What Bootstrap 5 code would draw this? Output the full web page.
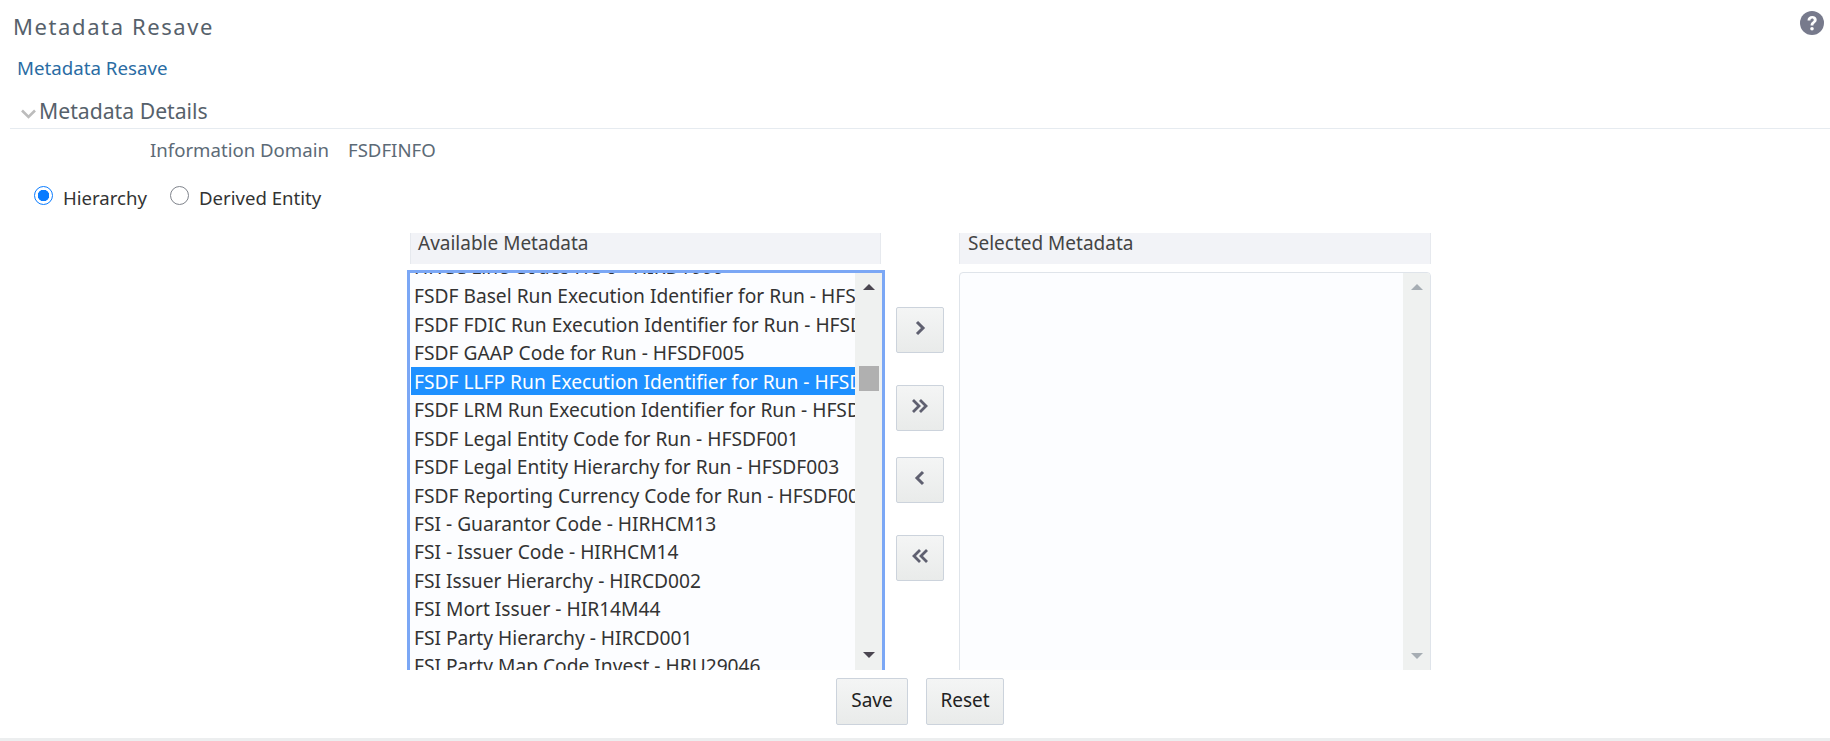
<!DOCTYPE html>
<html lang="en">
<head>
<meta charset="utf-8">
<title>Metadata Resave</title>
<link href="https://cdn.jsdelivr.net/npm/bootstrap@5.3.0/dist/css/bootstrap.min.css" rel="stylesheet">
<style>
html,body{height:741px;overflow:hidden;background:#fff}
body{font-family:"Noto Sans","Open Sans",sans-serif;font-size:18.600px;color:#333;position:relative}
.page-title{font-size:22px;letter-spacing:1.600px;color:#56616b;font-weight:400;margin:0;height:54px;padding:10px 13px 0;line-height:32px}
.help-dot{position:absolute;top:11px;right:6px;width:24px;height:24px}
.crumb{display:block;margin-left:17px;height:28px;line-height:28px;font-size:18.700px;color:#2a6ca3;text-decoration:none}
.section-head{margin-left:10px;height:47px;padding-top:11px;border-bottom:1px solid #e6ebf0;display:flex;align-items:center;font-size:21.200px;color:#56616b;line-height:28px}
.section-head svg{margin:7px 3px 0 11px}
.info-row{height:43px;padding-bottom:2px;display:flex;align-items:center;color:#5c6a76;font-size:18.600px}
.info-label{margin-left:150px;width:198px}
.radio-row{height:46px;padding-left:34px;gap:23px;font-size:18.600px;color:#333}
.radio-row .form-check{margin:0;padding:0;display:flex;align-items:center;gap:10px;min-height:0}
.radio-row label{padding-top:6px}
.radio-row .form-check-input{float:none;margin:2px 0 0;width:19px;height:19px;border:1.500px solid #80848c}
.radio-row .form-check-input:checked{--bs-form-check-bg-image:radial-gradient(circle,#0a7cff 0,#0a7cff 5.500px,#fff 6px);background-color:#fff;border-color:#0a7cff}
.shuttle{margin-left:407px;margin-top:15px;width:1024px;height:437px;overflow:hidden;display:flex;align-items:flex-start}
.avail-col{width:478px;flex:none}
.sel-col{width:472px;flex:none}
.col-head{height:31px;margin:0 4px 0 3px;background:#f2f3f7;border-left:1px solid #e6e9ee;border-right:1px solid #e6e9ee;padding-left:7px;line-height:20px;font-size:19px;color:#444}
.sel-col .col-head{margin:0;padding-left:8px}
.list-frame{height:420px;display:flex;overflow:hidden;background:#fcfdff}
.avail-col .list-frame{margin-top:6px;border:3px solid #7ba7f5;border-bottom:0;padding-left:1px}
.sel-col .list-frame{margin-top:8px;border:1px solid #dfe4ea;border-radius:4px}
.opt-list{flex:1;min-width:0;margin:0;padding:0;list-style:none;overflow:hidden}
.opt-row{height:28.440px;line-height:28.440px;padding:1px 0 0 3px;white-space:nowrap;overflow:hidden;font-size:19.200px;color:#333}
.opt-row.first{margin-top:-20px;padding-top:0;line-height:28px}
.opt-row.chosen{background:#1e90ff;color:#fff}
.fake-scroll{flex:none;width:27px;background:#eff1f0;position:relative}
.fake-scroll .thumb{position:absolute;left:4px;top:93px;width:20px;height:25px;background:#b0b0b0}
.fake-scroll .up,.fake-scroll .down{position:absolute;left:8px;width:0;height:0;border-left:6px solid transparent;border-right:6px solid transparent}
.fake-scroll .up{top:11px;border-bottom:6px solid #4a4650}
.fake-scroll .down{top:379px;border-top:6px solid #4a4650}
.sel-col .fake-scroll .up{border-bottom-color:#a6adb3}
.sel-col .fake-scroll .down{border-top-color:#a6adb3;top:380px}
.mover{flex:none;width:74px;padding:74px 0 0 11px}
.mover-btn{display:flex;align-items:center;justify-content:center;width:48px;height:46px;padding:0;border:1px solid #ccd3dc;border-radius:2px;background:linear-gradient(#f4f5f5,#e9ebea)}
.mover-btn svg{margin-bottom:4px}
.mover-btn.gap-a{margin-bottom:32px}
.mover-btn.gap-b{margin-bottom:26px}
.foot-row{margin-top:8px;height:47px;gap:18px;padding-left:836px}
.plain-btn{height:47px;border:1px solid #ccd3dc;border-radius:2px;background:linear-gradient(#f4f5f5,#e9ebea);font-size:19px;color:#222;padding:0 0 2px}
.plain-btn.save{width:72px}
.plain-btn.reset{width:78px}
.foot-line{position:absolute;left:0;right:0;bottom:0;height:3px;background:#eceeef}
</style>
</head>
<body>
<h1 class="page-title">Metadata Resave</h1>
<svg class="help-dot" viewBox="0 0 24 24" aria-hidden="true"><circle cx="12" cy="12" r="12" fill="#777a8c"/><path d="M7.500 9.500c0-3 2.100-4.500 4.700-4.500 2.600 0 4.500 1.500 4.500 3.800 0 3.200-3.300 3.200-3.300 5.700h-2.800c0-3.700 3.200-3.800 3.200-5.500 0-.9-.7-1.500-1.600-1.500-1.100 0-1.800.8-1.800 2z" fill="#fff"/><circle cx="12" cy="17.800" r="1.800" fill="#fff"/></svg>
<a class="crumb" href="#">Metadata Resave</a>
<div class="section-head"><svg width="15" height="10" viewBox="0 0 15 10" aria-hidden="true"><path d="M1 1.500l6.500 6.500L14 1.500" fill="none" stroke="#bcbcbc" stroke-width="2.600"/></svg><span>Metadata Details</span></div>
<div class="info-row"><span class="info-label">Information Domain</span><span>FSDFINFO</span></div>
<div class="radio-row d-flex align-items-center">
  <div class="form-check"><input class="form-check-input" type="radio" name="kind" id="r1" checked><label for="r1">Hierarchy</label></div>
  <div class="form-check"><input class="form-check-input" type="radio" name="kind" id="r2"><label for="r2">Derived Entity</label></div>
</div>
<div class="shuttle">
  <div class="avail-col">
    <div class="col-head">Available Metadata</div>
    <div class="list-frame">
      <ul class="opt-list">
        <li class="opt-row first">HHCC Line Codes HC 6 - HIRD1000</li>
        <li class="opt-row">FSDF Basel Run Execution Identifier for Run - HFSDF002</li>
        <li class="opt-row">FSDF FDIC Run Execution Identifier for Run - HFSDF006</li>
        <li class="opt-row">FSDF GAAP Code for Run - HFSDF005</li>
        <li class="opt-row chosen">FSDF LLFP Run Execution Identifier for Run - HFSDF007</li>
        <li class="opt-row">FSDF LRM Run Execution Identifier for Run - HFSDF008</li>
        <li class="opt-row">FSDF Legal Entity Code for Run - HFSDF001</li>
        <li class="opt-row">FSDF Legal Entity Hierarchy for Run - HFSDF003</li>
        <li class="opt-row">FSDF Reporting Currency Code for Run - HFSDF004</li>
        <li class="opt-row">FSI - Guarantor Code - HIRHCM13</li>
        <li class="opt-row">FSI - Issuer Code - HIRHCM14</li>
        <li class="opt-row">FSI Issuer Hierarchy - HIRCD002</li>
        <li class="opt-row">FSI Mort Issuer - HIR14M44</li>
        <li class="opt-row">FSI Party Hierarchy - HIRCD001</li>
        <li class="opt-row">FSI Party Map Code Invest - HRU29046</li>
      </ul>
      <div class="fake-scroll"><span class="up"></span><span class="thumb"></span><span class="down"></span></div>
    </div>
  </div>
  <div class="mover">
    <button class="mover-btn gap-a" type="button" aria-label="Move"><svg width="12" height="16" viewBox="0 0 12 16"><path d="M3 2l6 6-6 6" fill="none" stroke="#5f6070" stroke-width="3"/></svg></button>
    <button class="mover-btn gap-b" type="button" aria-label="Move all"><svg width="18" height="16" viewBox="0 0 18 16"><path d="M2 2l6 6-6 6M9 2l6 6-6 6" fill="none" stroke="#5f6070" stroke-width="2.800"/></svg></button>
    <button class="mover-btn gap-a" type="button" aria-label="Remove"><svg width="12" height="16" viewBox="0 0 12 16"><path d="M9 2L3 8l6 6" fill="none" stroke="#5f6070" stroke-width="3"/></svg></button>
    <button class="mover-btn" type="button" aria-label="Remove all"><svg width="18" height="16" viewBox="0 0 18 16"><path d="M9 2L3 8l6 6M16 2l-6 6 6 6" fill="none" stroke="#5f6070" stroke-width="2.800"/></svg></button>
  </div>
  <div class="sel-col">
    <div class="col-head">Selected Metadata</div>
    <div class="list-frame">
      <div class="opt-list"></div>
      <div class="fake-scroll"><span class="up"></span><span class="down"></span></div>
    </div>
  </div>
</div>
<div class="foot-row d-flex">
  <button class="plain-btn save" type="button">Save</button>
  <button class="plain-btn reset" type="button">Reset</button>
</div>
<div class="foot-line"></div>
<script src="https://cdn.jsdelivr.net/npm/bootstrap@5.3.0/dist/js/bootstrap.bundle.min.js"></script>
</body>
</html>
